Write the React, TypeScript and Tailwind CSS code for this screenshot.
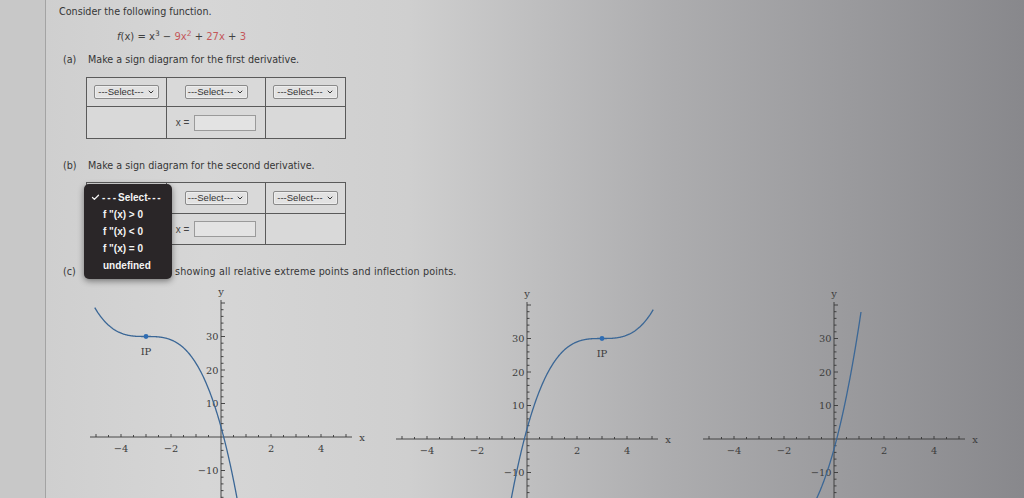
import React from "react";
import { ChevronDown, Check } from "lucide-react";

type GProps = {
  ox: number;
  oy: number;
  f: (x: number) => number;
  x0: number;
  x1: number;
  ip?: [number, number];
};

function Graph({ ox, oy, f, x0, x1, ip }: GProps) {
  const sx = 25;
  const sy = 3.35;
  const pts: string[] = [];
  for (let i = 0; i <= 240; i++) {
    const x = x0 + ((x1 - x0) * i) / 240;
    pts.push(`${(ox + x * sx).toFixed(2)},${(oy - f(x) * sy).toFixed(2)}`);
  }
  const xt: React.ReactNode[] = [];
  for (let k = -10; k <= 10; k++) {
    if (k === 0) continue;
    const px = ox + k * 0.5 * sx;
    xt.push(<line key={"x" + k} x1={px} x2={px} y1={oy} y2={oy - (k % 2 === 0 ? 3 : 2)} />);
  }
  const yt: React.ReactNode[] = [];
  for (let v = -20; v <= 40; v += 2) {
    if (v === 0) continue;
    const py = oy - v * sy;
    yt.push(<line key={"y" + v} x1={ox} x2={ox + (v % 10 === 0 ? 4 : 2.5)} y1={py} y2={py} />);
  }
  const serif = { fontFamily: '"DejaVu Serif", "Liberation Serif", serif' };
  return (
    <svg width={305} height={213} className="shrink-0 overflow-hidden block">
      <g stroke="#383838" strokeWidth={0.9}>
        <line x1={ox - 131} x2={ox + 131} y1={oy} y2={oy} />
        <line x1={ox} x2={ox} y1={oy - 137} y2={213} />
        {xt}
        {yt}
      </g>
      <g fill="#3c3c3c" fontSize={9.8} style={serif}>
        {[-4, -2, 2, 4].map((k) => (
          <text key={k} x={ox + k * sx} y={oy + 15} textAnchor="middle">
            {k < 0 ? "\u2212" + Math.abs(k) : String(k)}
          </text>
        ))}
        {[30, 20, 10, -10].map((v) => (
          <text key={v} x={ox - 2.5} y={oy - v * sy + 3.5} textAnchor="end">
            {v < 0 ? "\u2212" + Math.abs(v) : String(v)}
          </text>
        ))}
        <text x={ox + 141} y={oy + 4} textAnchor="middle" fontSize={10}>x</text>
        <text x={ox} y={oy - 142} textAnchor="middle" fontSize={10}>y</text>
        {ip && (
          <text x={ox + ip[0] * sx} y={oy - ip[1] * sy + 18} textAnchor="middle" fontSize={10}>
            IP
          </text>
        )}
      </g>
      <polyline points={pts.join(" ")} fill="none" stroke="#3b6796" strokeWidth={1.3} />
      {ip && <circle cx={ox + ip[0] * sx} cy={oy - ip[1] * sy} r={2.4} fill="#2f6db3" />}
    </svg>
  );
}

function SelectBox({ w }: { w: number }) {
  return (
    <div
      className="h-[14px] flex items-center justify-center gap-[3px] border border-[#8a8a8a] rounded-[2px] bg-[#e2e2e2] text-[#333] text-[9.5px] leading-none shadow-[0_0_0_1px_rgba(255,255,255,0.4)_inset]"
      style={{ width: w, fontFamily: '"Liberation Sans", Arial, sans-serif' }}
    >
      <span>---Select---</span>
      <ChevronDown size={8} strokeWidth={3} />
    </div>
  );
}

function XInput() {
  return (
    <div className="flex items-center gap-[5px]">
      <span className="text-[10px] text-[#444]" style={{ fontFamily: '"Liberation Sans", Arial, sans-serif' }}>
        x =
      </span>
      <div className="w-[62px] h-[16px] border border-[#9a9a9a] bg-[#e3e3e3]" />
    </div>
  );
}

function SignTable({ h1, h2, hideFirst }: { h1: number; h2: number; hideFirst?: boolean }) {
  return (
    <div
      className="grid grid-cols-[80px_99px_80px] w-[260px] border-l border-t border-[#5a5a5a] bg-[#d9d9d9]"
      style={{ gridTemplateRows: `${h1}px ${h2}px` }}
    >
      <div className="border-r border-b border-[#5a5a5a] flex items-center justify-center">
        {!hideFirst && <SelectBox w={65} />}
      </div>
      <div className="border-r border-b border-[#5a5a5a] flex items-center justify-center">
        <SelectBox w={63} />
      </div>
      <div className="border-r border-b border-[#5a5a5a] flex items-center justify-center">
        <SelectBox w={65} />
      </div>
      <div className="border-r border-b border-[#5a5a5a]" />
      <div className="border-r border-b border-[#5a5a5a] flex items-center justify-center">
        <XInput />
      </div>
      <div className="border-r border-b border-[#5a5a5a]" />
    </div>
  );
}

export default function App() {
  return (
    <div
      className="w-[1024px] h-[498px] overflow-hidden flex bg-[linear-gradient(90deg,#cdcdcd_0%,#d6d6d6_20%,#cfcfcf_40%,#adadaf_65%,#88888c_100%)]"
      style={{ fontFamily: '"DejaVu Sans", Verdana, sans-serif' }}
    >
      <div className="w-[45px] shrink-0 bg-[#c8c8c8]" />
      <div className="flex-1 border-l border-[#a3a3a3] pl-[13px] pt-[5px] text-[#363636] text-[9.6px]">
        <div className="h-[14px] leading-[14px]">Consider the following function.</div>
        <div className="h-[14px] leading-[14px] mt-[11px] ml-[58px] text-[10px] text-[#404040]">
          <i>f</i>(x) = x<sup className="text-[7.5px]">3</sup> &minus;{" "}
          <span className="text-[#c4585a]">
            9x<sup className="text-[7.5px]">2</sup>
          </span>{" "}
          + <span className="text-[#c4585a]">27x</span> + <span className="text-[#c4585a]">3</span>
        </div>
        <div className="h-[14px] leading-[14px] mt-[9px] ml-[4px] flex">
          <span className="w-[25px]">(a)</span>
          <span>Make a sign diagram for the first derivative.</span>
        </div>
        <div className="mt-[10px] ml-[27px]">
          <SignTable h1={29} h2={32} />
        </div>
        <div className="h-[14px] leading-[14px] mt-[20px] ml-[4px] flex">
          <span className="w-[25px]">(b)</span>
          <span>Make a sign diagram for the second derivative.</span>
        </div>
        <div className="mt-[9px] ml-[27px] relative w-[260px]">
          <SignTable h1={31} h2={31} hideFirst />
          <div
            className="absolute left-[-2px] top-[2px] w-[88px] h-[95px] rounded-[5px] bg-[#2a2628] shadow-[0_2px_6px_rgba(0,0,0,0.45)] pt-[5px] text-[#f4f4f4] text-[10px] font-bold"
            style={{ fontFamily: '"Liberation Sans", Arial, sans-serif' }}
          >
            <div className="h-[17px] flex items-center pl-[7px] gap-[2px]">
              <Check size={9} strokeWidth={3.5} />
              <span>
                <span className="tracking-[2px]">---</span>Select<span className="tracking-[1.5px]">---</span>
              </span>
            </div>
            <div className="h-[17px] flex items-center pl-[19px]">f &quot;(x) &gt; 0</div>
            <div className="h-[17px] flex items-center pl-[19px]">f &quot;(x) &lt; 0</div>
            <div className="h-[17px] flex items-center pl-[19px]">f &quot;(x) = 0</div>
            <div className="h-[17px] flex items-center pl-[19px]">undefined</div>
          </div>
        </div>
        <div className="h-[14px] leading-[14px] mt-[20px] ml-[4px] flex">
          <span className="w-[25px]">(c)</span>
          <span className="w-[87px]" />
          <span className="tracking-[0.15px]">showing all relative extreme points and inflection points.</span>
        </div>
        <div className="mt-[8px] ml-[21px] flex">
          <Graph ox={141} oy={150} f={(x) => -Math.pow(x + 3, 3) + 30} x0={-5.05} x1={0.85} ip={[-3, 30]} />
          <Graph ox={142} oy={152} f={(x) => Math.pow(x - 3, 3) + 30} x0={-0.85} x1={5.05} ip={[3, 30]} />
          <Graph ox={144} oy={152} f={(x) => Math.pow(x + 3, 3) - 30} x0={-0.8} x1={1.08} />
        </div>
      </div>
    </div>
  );
}
